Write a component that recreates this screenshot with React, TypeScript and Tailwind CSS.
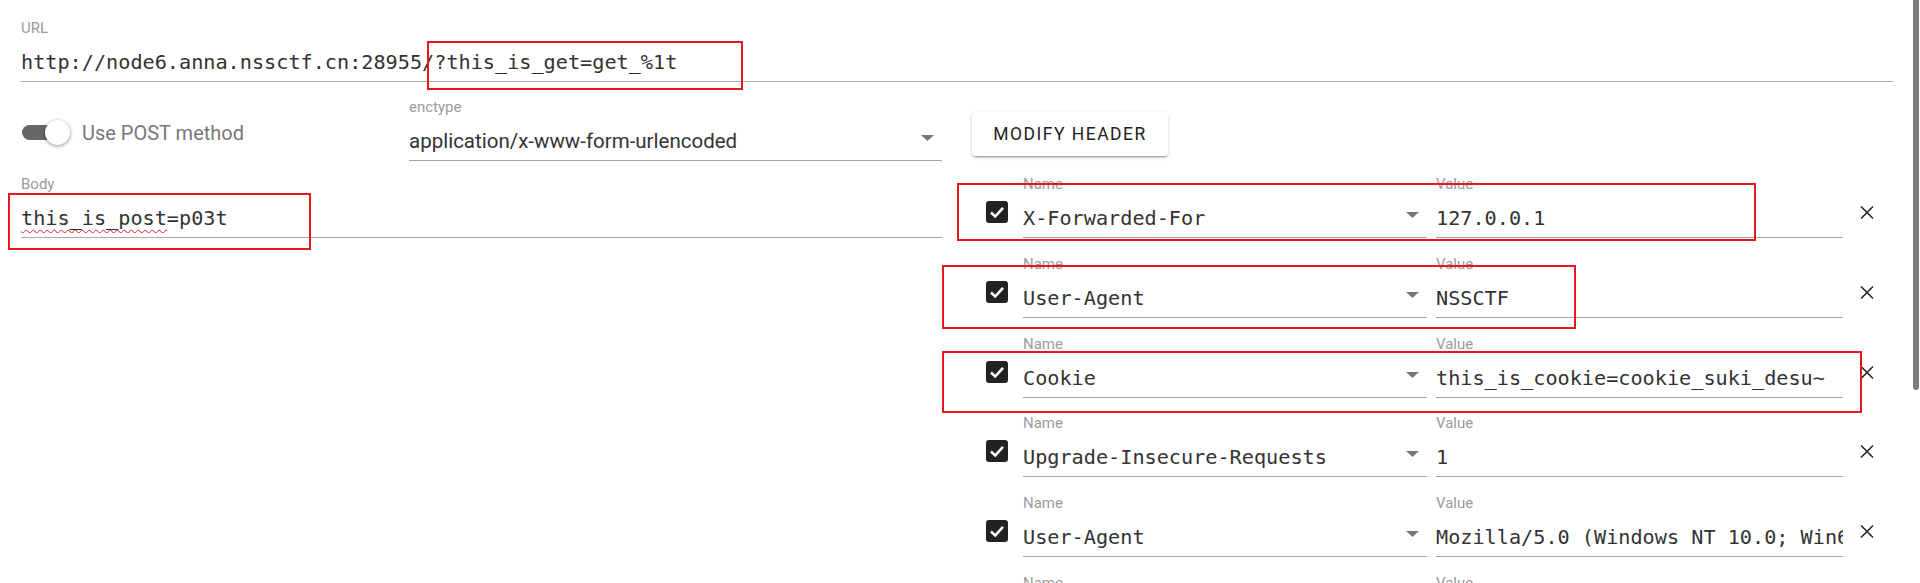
import React from "react";

type FieldProps = {
  label: string;
  children: React.ReactNode;
  arrow?: boolean;
  className?: string;
};

// material-ish text field: small label, value line, grey underline
function Field({ label, children, arrow, className }: FieldProps) {
  return (
    <div className={className}>
      <div className="text-[15px] leading-[18px] text-[#9b9b9b] whitespace-nowrap">{label}</div>
      <div className="mt-[8px] pb-[4px] border-b border-[#a6a6a6]">
        <div className="flex items-start h-[32px]">
          <div className="flex-1 min-w-0 h-[32px] overflow-hidden whitespace-nowrap pt-[6px] leading-[22px]">{children}</div>
          {arrow && (
            <svg width="13" height="6" viewBox="0 0 13 6" className="mt-[11px] mr-[8px] shrink-0">
              <polygon points="0,0 13,0 6.5,6" fill="#777" />
            </svg>
          )}
        </div>
      </div>
    </div>
  );
}

function Checkbox() {
  return (
    <svg width="22" height="22" viewBox="0 0 22 22" className="mt-[26px] ml-[14px] shrink-0">
      <rect x="0" y="0" width="22" height="22" rx="3" fill="#222" />
      <polyline points="5,11.5 9.2,15.5 17,6.8" fill="none" stroke="#fff" strokeWidth="2.6" />
    </svg>
  );
}

const headers = [
  { name: "X-Forwarded-For", value: "127.0.0.1" },
  { name: "User-Agent", value: "NSSCTF" },
  { name: "Cookie", value: "this_is_cookie=cookie_suki_desu~" },
  { name: "Upgrade-Insecure-Requests", value: "1" },
  {
    name: "User-Agent",
    value:
      "Mozilla/5.0 (Windows NT 10.0; Win64; x64) AppleWebKit/537.36 (KHTML, like Gecko) Chrome/110.0.0.0 Safari/537.36",
  },
  { name: "", value: "" },
];

export default function App() {
  return (
    <div className="relative w-[1920px] h-[583px] overflow-hidden bg-white flex font-[family-name:Roboto,sans-serif]">
      <div className="flex-1 pl-[21px] pr-[18px]">
        <Field label="URL" className="pt-[19px]">
          <span className="font-[family-name:DejaVu_Sans_Mono,monospace] text-[20.2px] text-[#333]">
            http://node6.anna.nssctf.cn:28955/?this_is_get=get_%1t
          </span>
        </Field>

        <div className="grid grid-cols-[921px_921px] gap-x-[30px]">
          <div>
            <div className="flex">
              <div className="w-[388px] pt-[38px]">
                <div className="flex items-center h-[26px]">
                  <div className="relative w-[49px] h-[26px] shrink-0">
                    <div className="absolute left-[1px] top-[5px] w-[42px] h-[15px] rounded-full bg-[#676767]" />
                    <div className="absolute left-[24px] top-0 w-[25px] h-[25px] rounded-full bg-white shadow-[0_1px_3px_1px_rgba(0,0,0,0.28)]" />
                  </div>
                  <span className="ml-[12px] text-[20px] text-[#787878]">Use POST method</span>
                </div>
              </div>
              <Field label="enctype" arrow className="flex-1 pt-[16px]">
                <span className="text-[20.5px] text-[#333]">application/x-www-form-urlencoded</span>
              </Field>
            </div>

            <Field label="Body" className="mt-[14px]">
              <span className="font-[family-name:DejaVu_Sans_Mono,monospace] text-[20.2px] text-[#333]">
                <span className="underline decoration-wavy decoration-[#e5212a] decoration-1 underline-offset-[4px]">
                  this_is_post
                </span>
                =p03t
              </span>
            </Field>
          </div>

          <div>
            <button className="mt-[30px] h-[44px] w-[196px] rounded-[4px] bg-white text-[17.5px] font-normal tracking-[1.5px] text-[#222] shadow-[0_3px_1px_-2px_rgba(0,0,0,0.2),0_2px_2px_0_rgba(0,0,0,0.14),0_1px_5px_0_rgba(0,0,0,0.12)]">
              MODIFY HEADER
            </button>

            <div className="mt-[19px] flex flex-col gap-[16.75px]">
              {headers.map((h, i) => (
                <div key={i} className="flex">
                  <Checkbox />
                  <Field label="Name" arrow className="ml-[15px] w-[404px]">
                    <span className="font-[family-name:DejaVu_Sans_Mono,monospace] text-[20.2px] text-[#333]">
                      {h.name}
                    </span>
                  </Field>
                  <Field label="Value" className="ml-[9px] w-[407px]">
                    <span className="font-[family-name:DejaVu_Sans_Mono,monospace] text-[20.2px] text-[#333]">
                      {h.value}
                    </span>
                  </Field>
                  <svg width="14" height="13" viewBox="0 0 14 13" className="ml-[17px] mt-[31px] shrink-0">
                    <path d="M1 0.5 L13 12.5 M13 0.5 L1 12.5" stroke="#222" strokeWidth="1.5" fill="none" />
                  </svg>
                </div>
              ))}
            </div>
          </div>
        </div>
      </div>

      <div className="w-[9px] shrink-0">
        <div className="ml-[2px] w-[6px] h-[390px] rounded-b-full bg-[#7d7d7d]" />
      </div>

      {/* red annotation boxes drawn over the screenshot */}
      <div className="absolute left-[427px] top-[41px] w-[316px] h-[49px] border-2 border-[#e8161e]" />
      <div className="absolute left-[8px] top-[193px] w-[303px] h-[57px] border-2 border-[#e8161e]" />
      <div className="absolute left-[957px] top-[183px] w-[799px] h-[58px] border-2 border-[#e8161e]" />
      <div className="absolute left-[942px] top-[265px] w-[634px] h-[64px] border-2 border-[#e8161e]" />
      <div className="absolute left-[942px] top-[351px] w-[920px] h-[62px] border-2 border-[#e8161e]" />
    </div>
  );
}
